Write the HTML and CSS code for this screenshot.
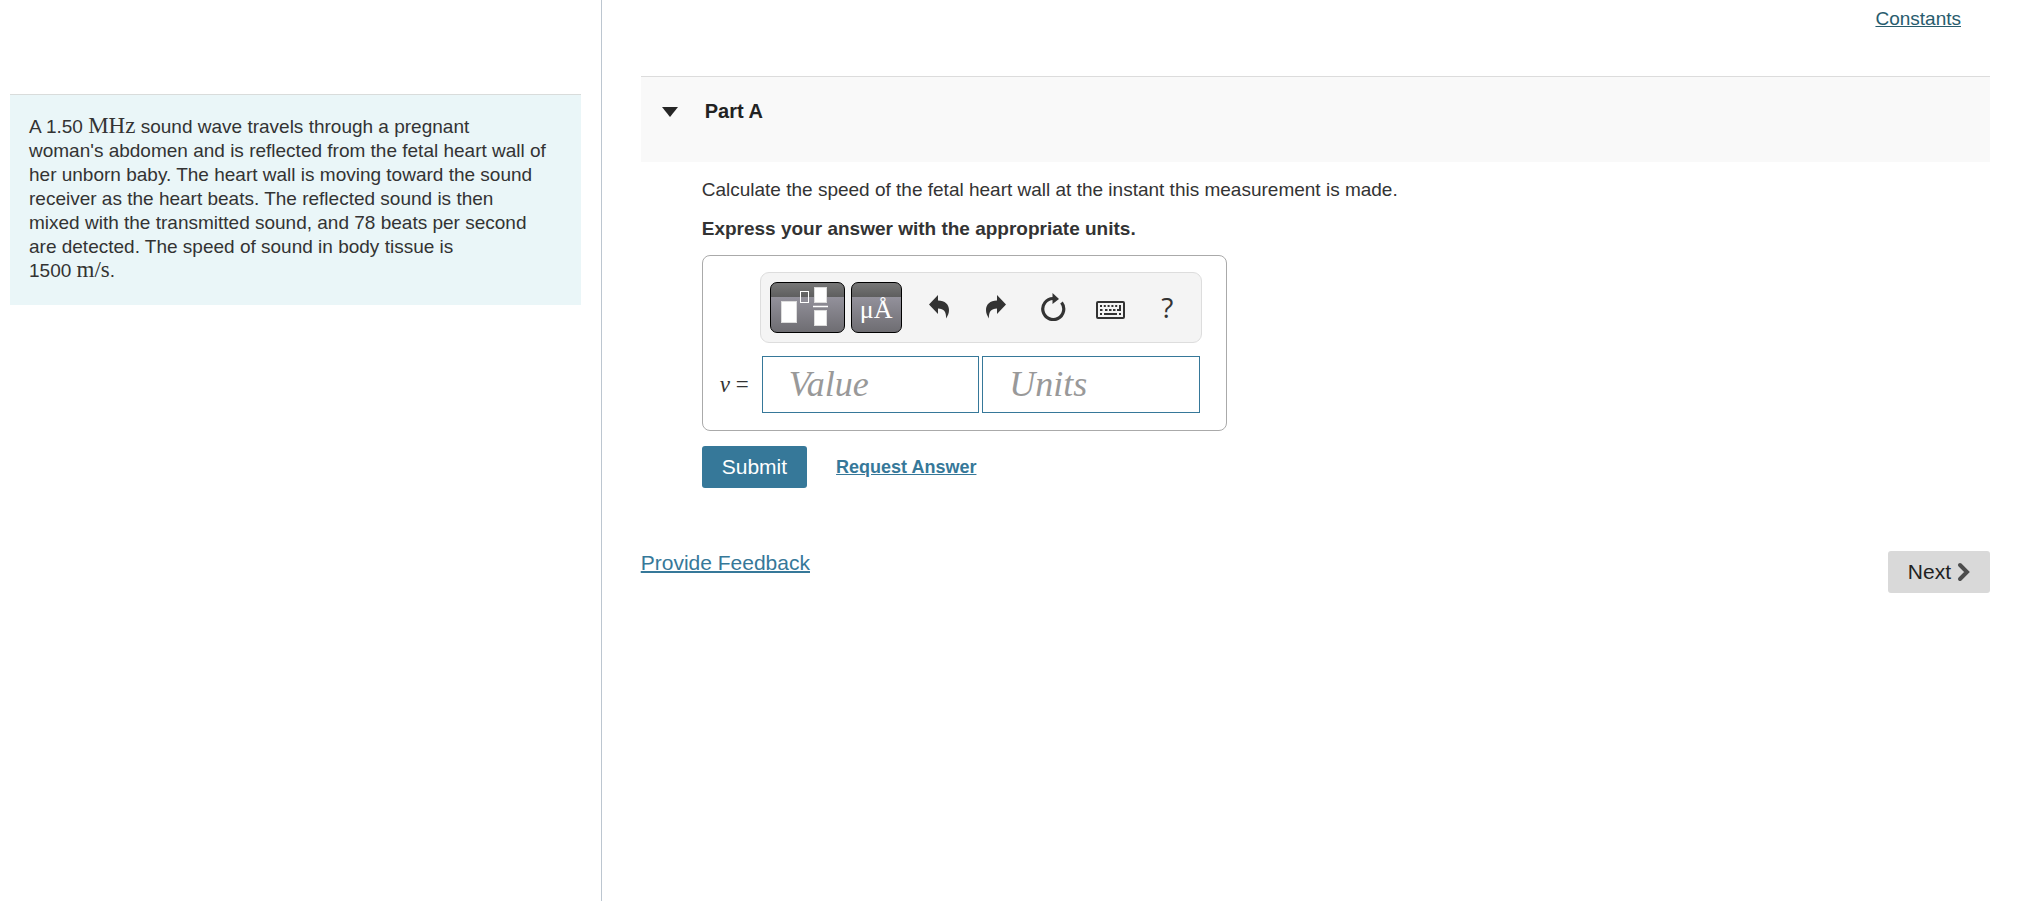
FILE: index.html
```
<!DOCTYPE html>
<html lang="en">
<head>
    <meta charset="UTF-8">
    <meta name="viewport" content="width=device-width, initial-scale=1.0">
    <title>Part A</title>
    <link rel="stylesheet" href="styles.css">
</head>
<body>
    <div class="page">
        <!-- Problem text -->
        <aside class="sidebar">
            <p class="problem">A 1.50 <span class="math">MHz</span> sound wave travels through a pregnant woman's abdomen and is reflected from the fetal heart wall of her unborn baby. The heart wall is moving toward the sound receiver as the heart beats. The reflected sound is then mixed with the transmitted sound, and 78 beats per second are detected. The speed of sound in body tissue is<br>1500 <span class="math">m/s</span>.</p>
        </aside>

        <main class="content">
            <div class="top-links">
                <a href="#constants">Constants</a>
            </div>

            <!-- Part A -->
            <section class="part">
                <header class="part-header">
                    <svg class="caret" viewBox="0 0 16 10"><path d="M0 0h16L8 10z"/></svg>
                    <h2>Part A</h2>
                </header>
                <div class="part-body">
                    <p>Calculate the speed of the fetal heart wall at the instant this measurement is made.</p>
                    <p class="instructions">Express your answer with the appropriate units.</p>

                    <form id="answer-form">
                        <div class="answer-box">
                            <div class="toolbar">
                                <button type="button" class="tool-dark templates" aria-label="Templates">
                                    <svg width="75" height="51" viewBox="0 0 75 51">
                                        <g fill="#fff" stroke="#ddd">
                                            <rect x="11.5" y="19.5" width="15" height="21"/>
                                            <rect x="44.5" y="5.5" width="12" height="15"/>
                                            <rect x="44.5" y="28.5" width="12" height="15"/>
                                        </g>
                                        <rect x="30.5" y="9.5" width="8" height="11" fill="none" stroke="#fff"/>
                                        <path d="M43 24.5h15" stroke="#fff" stroke-width="1.5"/>
                                    </svg>
                                </button>
                                <button type="button" class="tool-dark symbols" aria-label="Symbols">μÅ</button>
                                <div class="tools">
                                    <button type="button" class="tool" aria-label="Undo">
                                        <svg width="22" height="26" viewBox="0 0 22 26"><path d="M1 10.5L10 1v5.500C17 6.500 21 10.500 21 16c0 3-1 5.500-3 8.500C18.500 18 16 14.500 10 14.500V20z"/></svg>
                                    </button>
                                    <button type="button" class="tool" aria-label="Redo">
                                        <svg width="22" height="26" viewBox="0 0 22 26"><path d="M21 10.500L12 1v5.500C5 6.500 1 10.500 1 16c0 3 1 5.500 3 8.500C3.500 18 6 14.500 12 14.500V20z"/></svg>
                                    </button>
                                    <button type="button" class="tool" aria-label="Reset">
                                        <svg width="26" height="28" viewBox="0 0 26 28"><path d="M13 5.500A10.500 10.500 0 1 0 21.500 9.500" fill="none" stroke="#333" stroke-width="3.200"/><path d="M12.500 0L19 6l-6.500 5z"/></svg>
                                    </button>
                                    <button type="button" class="tool keyboard" aria-label="Keyboard">
                                        <svg width="29" height="18" viewBox="0 0 29 18">
                                            <rect x="1" y="1" width="27" height="16" rx="1" fill="none" stroke="#333" stroke-width="2"/>
                                            <g fill="none" stroke="#333" stroke-width="2">
                                                <path d="M4 5h18" stroke-dasharray="2 1.800"/>
                                                <path d="M4 9h3M9 9h13" stroke-dasharray="2.500 1.500"/>
                                                <path d="M24 4v5h-3M4 13h2M8 13h13M23 13h2"/>
                                            </g>
                                        </svg>
                                    </button>
                                    <button type="button" class="tool help" aria-label="Help">?</button>
                                </div>
                            </div>
                            <label class="variable" for="value"><i>v</i> =</label>
                            <div class="fields">
                                <input type="text" id="value" placeholder="Value">
                                <input type="text" id="units" placeholder="Units" aria-label="Units">
                            </div>
                        </div>
                        <div class="actions">
                            <button type="submit" class="btn btn-submit">Submit</button>
                            <a class="request" href="#answer">Request Answer</a>
                        </div>
                    </form>
                </div>
            </section>

            <footer class="footer">
                <a class="feedback" href="#feedback">Provide Feedback</a>
                <button type="button" class="btn btn-next">Next
                    <svg width="13" height="20" viewBox="0 0 13 20"><path d="M3 3l7 7-7 7" fill="none" stroke="#4d4d4d" stroke-width="4" stroke-linecap="round"/></svg>
                </button>
            </footer>
        </main>
    </div>
</body>
</html>
```

FILE: styles.css
```
* {
    box-sizing: border-box;
}

body {
    margin: 0;
    font-family: "Liberation Sans", Arial, sans-serif;
    font-size: 19px;
    line-height: 24px;
    color: #333;
    background: #fff;
}

a {
    color: #367899;
}

p,
h2 {
    margin: 0;
}

button {
    font-family: inherit;
    cursor: pointer;
}

.page {
    display: grid;
    grid-template-columns: 29.7% 1fr;
    min-height: 100vh;
}

.sidebar {
    padding: 94px 20px 0 10px;
    border-right: 1px solid #bcc6d0;
}

.problem {
    padding: 20px 32px 22px 19px;
    border-top: 1px solid #d9dcdb;
    background: #eaf6f8;
}

.math {
    font-family: "Liberation Serif", "Times New Roman", serif;
    font-size: 23px;
    line-height: 0;
}

.content {
    padding: 0 36px 0 39px;
}

/* Header links */
.top-links {
    height: 76px;
    padding: 7px 29px 0 0;
    text-align: right;
}

.top-links a {
    color: #285c6d;
}

/* Part */
.part-header {
    display: flex;
    align-items: flex-start;
    gap: 27px;
    height: 86px;
    padding: 22px 21px;
    border-top: 1px solid #dcdcdc;
    background: #f9f9f9;
}

.caret {
    width: 16px;
    height: 10px;
    margin-top: 8px;
    fill: #262626;
}

.part-header h2 {
    font-size: 20px;
    color: #222;
}

.part-body {
    padding: 16px 0 0 61px;
}

.instructions {
    margin: 15px 0 14px;
    font-weight: bold;
}

.answer-box {
    display: grid;
    grid-template-columns: 42px 442px;
    row-gap: 13px;
    width: fit-content;
    padding: 16px 24px 17px 15px;
    border: 1px solid #aaa;
    border-radius: 8px;
}

.toolbar {
    grid-column: 2;
    display: flex;
    align-items: center;
    gap: 6px;
    padding: 9px 8px 9px 9px;
    border: 1px solid #ddd;
    border-radius: 9px;
    background: #f4f4f4;
}

.tool-dark {
    width: 51px;
    height: 51px;
    padding: 0;
    border: 1px solid #000;
    border-radius: 7px;
    color: #fff;
    background: linear-gradient(#777 0, #5e5e5e 14px, #93919b 14px, #6e6d72 100%);
}

.templates {
    width: 75px;
}

.tool-dark svg {
    display: block;
    margin: -1px;
}

.symbols {
    padding-top: 5px;
    font-family: "Liberation Serif", "Times New Roman", serif;
    font-size: 26px;
}

.tools {
    display: flex;
    gap: 6px;
    margin-left: 6px;
}

.tool {
    display: flex;
    align-items: center;
    justify-content: center;
    width: 51px;
    height: 51px;
    padding: 0 0 2px;
    border: 0;
    background: none;
    color: #333;
    fill: #333;
}

.keyboard {
    padding-top: 7px;
}

.help {
    font-family: "Open Sans", sans-serif;
    font-size: 28px;
}

.variable {
    align-self: center;
    font-family: "Liberation Serif", "Times New Roman", serif;
    font-size: 23px;
    padding-left: 2px;
}

.fields {
    display: grid;
    grid-template-columns: 1fr 1fr;
    gap: 3px;
    padding: 0 2px;
}

.fields input {
    width: 100%;
    height: 57px;
    padding: 0 26px 2px;
    border: 1px solid #367899;
    border-radius: 0;
    font-family: "Liberation Serif", "Times New Roman", serif;
    font-size: 36px;
}

.fields input::placeholder {
    color: #999;
    font-style: italic;
}

.actions {
    display: flex;
    align-items: center;
    gap: 29px;
    margin-top: 15px;
}

.btn {
    height: 42px;
    padding: 0 20px;
    border: 0;
    border-radius: 3px;
    font-size: 21px;
}

.btn-submit {
    color: #fff;
    background: #367899;
}

.request {
    font-size: 18px;
    font-weight: bold;
}

/* Footer */
.footer {
    display: flex;
    justify-content: space-between;
    align-items: flex-start;
    margin-top: 63px;
}

.feedback {
    font-size: 21px;
    text-decoration-thickness: 2px;
}

.btn-next {
    display: flex;
    align-items: center;
    gap: 6px;
    color: #222;
    background: #d9d9d9;
}
```
